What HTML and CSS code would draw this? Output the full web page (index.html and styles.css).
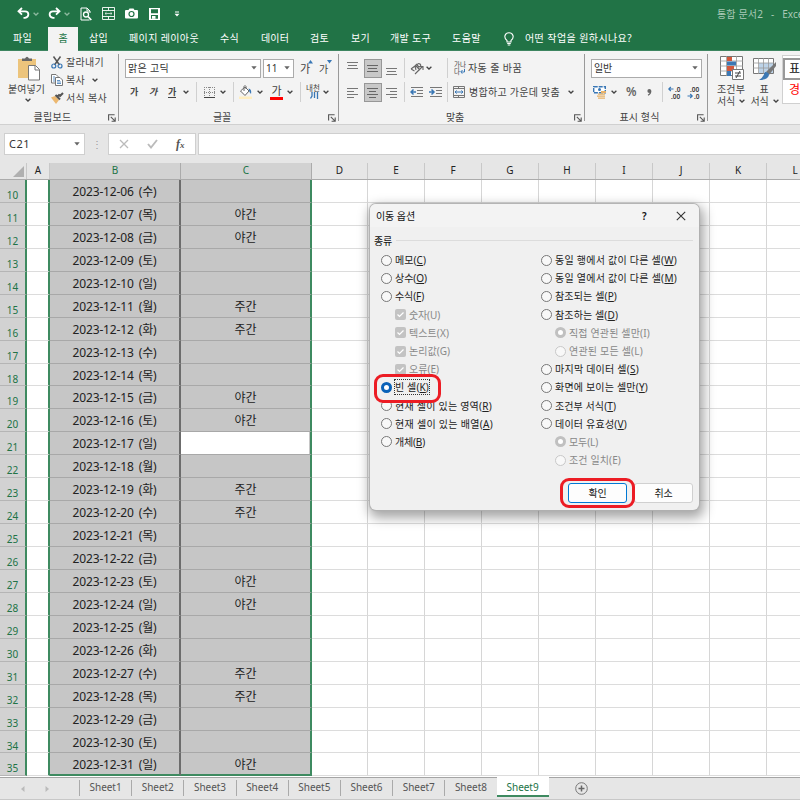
FILE: index.html
```html
<!DOCTYPE html>
<html lang="ko">
<head>
<meta charset="utf-8">
<title>통합 문서2 - Excel</title>
<link rel="stylesheet" href="styles.css">
</head>
<body>
<svg class="defs" width="0" height="0">
  <symbol id="chev" viewBox="0 0 6 4"><path d="M.6.7 3 3 5.4.7" fill="none" stroke="currentColor" stroke-width="1.3"/></symbol>
  <symbol id="tri" viewBox="0 0 6 4"><path d="M.3.3h5.4L3 3.4z" fill="#666"/></symbol>
  <symbol id="launch" viewBox="0 0 8 8"><path d="M.6 6.5V.7h6M2.8 2.8l4 4M7.2 3.4v3.8H3.6" fill="none" stroke="#555" stroke-width="1.1"/></symbol>
</svg>
<div class="app">
  <header class="titlebar">
    <div class="quick">
      <svg width="13" height="13" viewBox="0 0 13 13"><path d="M5 1 1.5 4.3 5 7.7M2 4.3h6c4.5 0 4.5 6 0 6.5H6.5" fill="none" stroke="#fff" stroke-width="1.8"/></svg>
      <svg class="dim" width="6" height="4"><use href="#chev"/></svg>
      <svg width="13" height="13" viewBox="0 0 13 13"><path d="M8 1l3.5 3.3L8 7.7M11 4.3H5c-4.5 0-4.5 6 0 6.5h1.5" fill="none" stroke="#fff" stroke-width="1.8"/></svg>
      <svg class="dim" width="6" height="4"><use href="#chev"/></svg>
      <svg width="12" height="14" viewBox="0 0 12 14"><path d="M9.5 13H1V1h6l3 3v2M7 1v3h3" fill="none" stroke="#fff"/><circle cx="6" cy="7.5" r="2.5" fill="none" stroke="#fff" stroke-width="1.3"/><path d="M8 9.5l3.3 3.5" stroke="#fff" stroke-width="1.7"/></svg>
      <svg width="13" height="13" viewBox="0 0 13 13"><path d="M.5.500h12v12H.500zM.500 3.500h12M.500 9.500h12M6.500.500v3M6.500 9.500v3" fill="none" stroke="#fff" stroke-width=".9"/><path d="M3 6.500h7M4.500 5.200 3 6.500l1.500 1.300M8.500 5.200 10 6.500 8.500 7.800" fill="none" stroke="#d5e5dc" stroke-width=".8"/></svg>
      <svg width="13" height="11" viewBox="0 0 13 11"><path d="M1 2h2.500l1-1.500h4l1 1.500H12q1 0 1 1v6.500q0 1-1 1H1q-1 0-1-1V3q0-1 1-1z" fill="#fff"/><circle cx="6.500" cy="6" r="2.500" fill="none" stroke="#217346" stroke-width="1.200"/></svg>
      <svg width="11" height="12" viewBox="0 0 11 12"><path d="M0 0h11v12H0z" fill="#fff"/><path d="M2 1.200h7v4H2zM2 7h7v3.800H2z" fill="#217346"/><path d="M3 8h3.500v2.800H3z" fill="#fff"/></svg>
      <svg width="6" height="6" viewBox="0 0 6 6"><path d="M1 .5h4v1H1zM.5 2.700h5L3 5.500z" fill="#fff"/></svg>
    </div>
    <div class="doc"><span data-w="46">통합 문서2</span><span>-</span><span>Excel</span></div>
  </header>
  <nav class="tabs">
    <div><span data-w="19">파일</span></div><div class="on"><span>홈</span></div><div><span data-w="19">삽입</span></div><div><span data-w="70">페이지 레이아웃</span></div><div><span data-w="19">수식</span></div><div><span data-w="28">데이터</span></div><div><span data-w="19">검토</span></div><div><span data-w="19">보기</span></div><div><span data-w="41">개발 도구</span></div><div><span data-w="29">도움말</span></div>
    <svg width="10" height="14" viewBox="0 0 10 14"><path d="M3 10V8.500C-.8 5.500.9.700 5 .700s5.800 4.800 2 7.800V10zM3.200 11.500h3.600M3.700 13h2.600" fill="none" stroke="#fff" stroke-width="1.100"/></svg>
    <div><span data-w="107">어떤 작업을 원하시나요?</span></div>
  </nav>

  <section class="ribbon">
    <div class="group clip">
      <div class="cliptop">
        <div class="big">
          <svg width="24" height="25" viewBox="0 0 24 25"><path d="M1 3h18v19H1z" fill="#ecc47c"/><path d="M5 5V2.500h3Q10-1 12 2.500h3V5z" fill="#666"/><path d="M11.500 9.500h7l4 4v10.500h-11z" fill="#fff" stroke="#777"/><path d="M18 9.500V14h4.500" fill="none" stroke="#777"/></svg>
          <span data-w="37">붙여넣기</span>
          <svg width="6" height="4"><use href="#chev"/></svg>
        </div>
        <div class="small">
          <div><svg width="12" height="13" viewBox="0 0 12 13"><path d="M2.500.500l6 8.500M9.500.500l-6 8.500" stroke="#555" stroke-width="1.500"/><circle cx="2.800" cy="10" r="2" fill="none" stroke="#3977b5" stroke-width="1.200"/><circle cx="9" cy="10" r="2" fill="none" stroke="#3977b5" stroke-width="1.200"/></svg><span data-w="38">잘라내기</span></div>
          <div><svg width="12" height="12" viewBox="0 0 12 12"><path d="M.500.500h4.500l2 2V9H.500z" fill="#fff" stroke="#777"/><path d="M4.500 3.500H9l2.500 2.500v5.500h-7z" fill="#fff" stroke="#777"/><path d="M2 3h2M2 5h2M2 7h2M6 6.500h3M6 8h4M6 9.500h4" stroke="#3977b5" stroke-width=".8"/></svg><span data-w="19">복사</span><svg width="6" height="4"><use href="#chev"/></svg></div>
          <div><svg width="13" height="12" viewBox="0 0 13 12"><path d="M0 5.500l4-1.500 4 4-3 4z" fill="#ecb870"/><path d="M4.500 3l4.500 4.500M6 5l2-2 2 1.500M9 4l3-3" stroke="#555" stroke-width="2" fill="none"/></svg><span data-w="41">서식 복사</span></div>
        </div>
      </div>
      <footer><span data-w="38">클립보드</span><svg width="8" height="8"><use href="#launch"/></svg></footer>
    </div>

    <div class="group font">
      <div class="r f1">
        <div class="sel"><span data-w="41">맑은 고딕</span><svg width="6" height="4"><use href="#tri"/></svg></div>
        <div class="sel"><span>11</span><svg width="6" height="4"><use href="#tri"/></svg></div>
        <div class="ga gabig">가<svg width="5" height="4" viewBox="0 0 5 4"><path d="M2.500 0 5 3.500H0z" fill="#3977b5"/></svg></div>
        <div class="ga">가<svg width="5" height="4" viewBox="0 0 5 4"><path d="M0 0h5L2.500 3.500z" fill="#3977b5"/></svg></div>
      </div>
      <div class="r f2">
        <b>가</b><b class="it">가</b><b class="un">가</b><svg width="6" height="4"><use href="#chev"/></svg><i></i>
        <svg width="11" height="11" viewBox="0 0 11 11"><path d="M.500 0v10M5.500 0v10M10.500 0v10M0 .500h11M0 5.500h11" stroke="#888" stroke-dasharray="1 1"/><path d="M0 10.500h11" stroke="#444"/></svg>
        <svg width="6" height="4"><use href="#chev"/></svg><i></i>
        <svg width="14" height="14" viewBox="0 0 14 14"><path d="M1.500 6 6 2l4 4-4 4.500z" fill="#fff" stroke="#666"/><path d="M5 6V1.500Q6-.500 7 1.500V4" fill="none" stroke="#666"/><path d="M9.500 3.500Q13 4 12 9 10 7 9.500 3.500z" fill="#3977b5"/><path d="M0 11.500h13V14H0z" fill="#ffeec0"/></svg>
        <svg width="6" height="4"><use href="#chev"/></svg>
        <div class="color">가</div>
        <svg width="6" height="4"><use href="#chev"/></svg><i></i>
        <div class="ruby">내천<svg width="9" height="7" viewBox="0 0 9 7"><path d="M2 0v4L.500 6.500M4.500 0v6M7.500 0v7" stroke="#3977b5" stroke-width="1.300" fill="none"/></svg></div>
        <svg width="6" height="4"><use href="#chev"/></svg>
      </div>
      <footer><span data-w="18">글꼴</span><svg width="8" height="8"><use href="#launch"/></svg></footer>
    </div>

    <div class="group align">
      <div class="r a1">
        <svg class="up" width="12" height="8" viewBox="0 0 12 8"><path d="M0 1.500h11M1 4.500h9M0 7.500h11" stroke="#777"/></svg>
        <div class="pressed"><svg width="12" height="8" viewBox="0 0 12 8"><path d="M0 1.500h11M1 4.500h9M0 7.500h11" stroke="#666"/></svg></div>
        <svg class="down" width="12" height="8" viewBox="0 0 12 8"><path d="M0 1.500h11M1 4.500h9M0 7.500h11" stroke="#777"/></svg><i></i>
        <svg width="14" height="14" viewBox="0 0 14 14"><path d="M1 8l3.500 2M1 8l4-3 1 4M5 4l5 5M6 3l3 3q3-1 1-3-2-1-3 1M5 13l7.500-7.500M9.500 5.500H13V9" fill="none" stroke="#666" stroke-width="1.100"/></svg>
        <svg width="6" height="4"><use href="#chev"/></svg><i></i>
        <div class="wrap">가나<div>다<svg width="5" height="5" viewBox="0 0 5 5"><path d="M4.500 0v3H1M2.500 1 .700 3l1.800 1.700" fill="none" stroke="#3977b5"/></svg></div></div>
        <span data-w="54">자동 줄 바꿈</span>
      </div>
      <div class="r a2">
        <svg width="12" height="11" viewBox="0 0 12 11"><path d="M0 1.500h11M0 4.500h7M0 7.500h11M0 10.500h7" stroke="#777"/></svg>
        <div class="pressed"><svg width="12" height="11" viewBox="0 0 12 11"><path d="M0 1.500h11M2 4.500h7M0 7.500h11M2 10.500h7" stroke="#666"/></svg></div>
        <svg width="12" height="11" viewBox="0 0 12 11"><path d="M0 1.500h11M4 4.500h7M0 7.500h11M4 10.500h7" stroke="#777"/></svg><i></i>
        <svg width="14" height="11" viewBox="0 0 14 11"><path d="M1 .500h12M7 3.500h6M7 6.500h6M1 9.500h12" stroke="#777"/><path d="M6 5H1M3.500 2.500 1 5l2.500 2.500" fill="none" stroke="#3977b5" stroke-width="1.500"/></svg>
        <svg width="14" height="11" viewBox="0 0 14 11"><path d="M1 .500h12M7 3.500h6M7 6.500h6M1 9.500h12" stroke="#777"/><path d="M0 5h5M2.500 2.500 5 5 2.500 7.500" fill="none" stroke="#3977b5" stroke-width="1.500"/></svg><i></i>
        <svg width="12" height="12" viewBox="0 0 12 12"><path d="M.500.500h11v11H.500zM.500 2.500h11M.500 9.500h11M5.500.500v2M5.500 9.500v2" fill="none" stroke="#777"/><path d="M2 6h8M3.700 4.500 2 6l1.700 1.500M8.300 4.500 10 6 8.300 7.500" fill="none" stroke="#3977b5"/></svg>
        <span data-w="91">병합하고 가운데 맞춤</span>
        <svg width="6" height="4"><use href="#chev"/></svg>
      </div>
      <footer><span data-w="18">맞춤</span><svg width="8" height="8"><use href="#launch"/></svg></footer>
    </div>

    <div class="group num">
      <div class="r n1"><div class="sel"><span data-w="18">일반</span><svg width="6" height="4"><use href="#tri"/></svg></div></div>
      <div class="r n2">
        <svg width="14" height="13" viewBox="0 0 14 13"><path d="M.700.700h11.600v6H.700z" fill="#fff" stroke="#3977b5" stroke-width="1.400" stroke-dasharray="4 1"/><circle cx="6.500" cy="3.500" r="1.500" fill="#3977b5"/><path d="M5 7.500h7v1.200H5zM4 9.500h8v1.200H4zM5 11.500h7v1.200H5z" fill="#e8b268"/><path d="M8 5h5v2H8z" fill="#e8b268"/></svg>
        <svg width="6" height="4"><use href="#chev"/></svg>
        <strong>%</strong>
        <svg width="5" height="7" viewBox="0 0 5 7"><circle cx="2.300" cy="2" r="1.900" fill="#666"/><path d="M3.700 1.500Q4.300 4.500 1 6.300" fill="none" stroke="#666" stroke-width="1.100"/></svg><i></i>
        <svg class="dec" width="13" height="13" viewBox="0 0 13 13"><path d="M5.500 3H.800M2.800 1 .800 3l2 2" fill="none" stroke="#3977b5" stroke-width="1.200"/><text x="7" y="6">.0</text><text x="3" y="12.500">.00</text></svg>
        <svg class="dec" width="13" height="13" viewBox="0 0 13 13"><text x="3" y="6">.00</text><path d="M.500 10h4.700M3.200 8l2 2-2 2" fill="none" stroke="#3977b5" stroke-width="1.200"/><text x="7" y="12.500">.0</text></svg>
      </div>
      <footer><span data-w="40">표시 형식</span><svg width="8" height="8"><use href="#launch"/></svg></footer>
    </div>

    <div class="group styles">
      <div class="big">
        <svg width="25" height="25" viewBox="0 0 25 25"><path d="M.500.500h22v19H.500z" fill="#fff" stroke="#777"/><path d="M6.500 0v20M16.500 0v20M0 5h23M0 10h23M0 15h23" stroke="#999" stroke-width=".8"/><path d="M7 1h5v4H7zM7 10h7v5H7z" fill="#d2583c"/><path d="M7 5.500h9v4H7zM7 15h4v5H7z" fill="#3c78b4"/><path d="M12.500 13.500h11v10h-11z" fill="#fff" stroke="#777"/><path d="M15 17h6M15 20h6M20 15l-4 7" stroke="#444"/></svg>
        <span data-w="28">조건부</span>
        <div><span data-w="18">서식</span><svg width="6" height="4"><use href="#chev"/></svg></div>
      </div>
      <div class="big">
        <svg width="25" height="25" viewBox="0 0 25 25"><path d="M.500 2.500h20v15H.500z" fill="#fff" stroke="#777"/><path d="M6 7h14v10H6z" fill="#bdd3e8"/><path d="M5.500 2v16M10.500 2v16M15.500 2v16M0 7h21M0 12h21" stroke="#999" stroke-width=".8"/><path d="M23 6v4l-7 9-3-3z" fill="#777"/><path d="M12 16q4 0 4 3-1 5-10 5 4-2 6-8z" fill="#3c78b4"/></svg>
        <span>표</span>
        <div><span data-w="18">서식</span><svg width="6" height="4"><use href="#chev"/></svg></div>
      </div>
      <div class="gallery"><div class="normal">표</div><div class="warn">경</div></div>
    </div>
  </section>

  <section class="formula">
    <div class="name"><span data-w="21">C21</span><svg width="6" height="4"><use href="#tri"/></svg></div>
    <div class="dots">⋮</div>
    <div class="fx">
      <svg width="10" height="10" viewBox="0 0 10 10"><path d="M1 1l8 8M9 1 1 9" stroke="#bbb" stroke-width="1.300"/></svg>
      <svg width="11" height="10" viewBox="0 0 11 10"><path d="M1 5l3 3.500L10 1" fill="none" stroke="#bbb" stroke-width="1.900"/></svg>
      <span>f<small>x</small></span>
    </div>
    <div class="bar"></div>
  </section>

  <main class="sheet">
    <div class="heads" id="heads"></div>
    <div class="rows" id="rows"></div>
  </main>

  <footer class="sheets">
    <div class="nav"><svg width="4" height="6" viewBox="0 0 4 6"><path d="M3.500 0v6L0 3z" fill="#bbb"/></svg><svg width="4" height="6" viewBox="0 0 4 6"><path d="M.500 0v6L4 3z" fill="#bbb"/></svg></div>
    <div class="tablist" id="tablist"></div>
    <svg class="plus" width="13" height="13" viewBox="0 0 13 13"><circle cx="6.500" cy="6.500" r="5.800" fill="none" stroke="#777"/><path d="M3.500 6.500h6M6.500 3.500v6" stroke="#666" stroke-width="1.500"/></svg>
  </footer>

  <div class="dialog">
    <div class="dtitle"><span data-w="39">이동 옵션</span><span class="q">?</span><svg width="10" height="10" viewBox="0 0 10 10"><path d="M.800.800l8.400 8.400M9.200.800.800 9.200" stroke="#333" stroke-width="1.100"/></svg></div>
    <div class="legend"><span data-w="18">종류</span><hr></div>
    <div class="options"><div id="left"></div><div id="right"></div></div>
    <div class="buttons"><div class="ok"><span data-w="18">확인</span></div><div><span data-w="18">취소</span></div></div>
    <div class="ring ring-option"></div>
    <div class="ring ring-ok"></div>
  </div>
</div>
<script src="app.js"></script>
</body>
</html>
```
FILE: styles.css
```css
* { box-sizing: border-box; }
body { margin: 0; background: #fff; font-family: "Noto Sans", "Noto Sans CJK KR", sans-serif; font-size: 10px; color: #444; }
.app { position: relative; width: 800px; height: 800px; overflow: hidden; display: flex; flex-direction: column; line-height: 14px; white-space: nowrap; }
.app svg { display: block; flex: none; }
.defs { position: absolute; }
span { flex: none; justify-self: start; }

.titlebar { height: 27px; background: #217346; display: flex; justify-content: space-between; color: #a9c9b7; }
.quick { display: grid; grid-template-columns: 16px 15px 16px 16px 22px 23px 24px 25px 10px; padding-left: 17px; align-items: center; height: 27px; }
.dim { color: #8db99f; }
.doc { display: flex; gap: 8px; padding-top: 7px; width: 83px; }
.tabs { height: 24px; background: #217346; color: #fff; display: grid; grid-template-columns: 48px 30px 38px 102px 29px 62px 38px 42px 61px 54px 21px 120px; align-items: center; border-bottom: 1px solid #3d8560; }
.tabs div { height: 24px; padding-top: 4px; padding-left: 0; }
.tabs div:first-child { padding-left: 13px; }
.tabs .on { background: #f3f3f3; color: #217346; text-align: center; }
.tabs div:nth-child(3) { padding-left: 11px; }
.tabs div:nth-child(4) { padding-left: 13px; }
.tabs div:nth-child(5) { padding-left: 2px; }
.tabs div:nth-child(6) { padding-left: 14px; }
.tabs div:nth-child(7) { padding-left: 1px; }
.tabs div:nth-child(8) { padding-left: 4px; }
.tabs div:nth-child(9) { padding-left: 1px; }
.tabs div:nth-child(10) { padding-left: 2px; }

.ribbon { height: 74px; background: #f3f3f3; border-bottom: 1px solid #d0d0d0; display: flex; }
.group { position: relative; flex: none; display: flex; flex-direction: column; padding-top: 6px; }
.group::after { content: ""; position: absolute; right: 0; top: 3px; width: 1px; height: 67px; background: #999; }
.group footer { display: flex; justify-content: center; align-items: center; height: 14px; position: relative; margin-top: auto; padding-right: 14px; }
.group footer svg { position: absolute; right: 3px; top: 4px; }
.clip { width: 119px; }
.font { width: 220px; }
.align { width: 246px; }
.num { width: 123px; }
.styles { width: 92px; flex-direction: row; }
.styles::after { display: none; }
.cliptop { display: flex; margin-top: -1px; }
.big { display: flex; flex-direction: column; align-items: center; width: 51px; flex: none; }
.big > svg:first-child { margin-left: 6px; }
.big > span { margin-top: 1px; height: 13px; }
.cliptop .big > span { margin-left: 2px; }
.cliptop .big > svg:last-child { margin-left: 5px; margin-top: 3px; }
.small div { display: grid; grid-template-columns: 15px 26px 6px; align-items: center; height: 18px; }
.small { margin-top: -3px; }
.r { display: grid; height: 22px; align-items: center; }
.r + .r { margin-top: 2px; }
.r i { display: block; width: 1px; height: 20px; background: #d0d0d0; }
.sel { height: 19px; background: #fff; border: 1px solid #ababab; display: flex; align-items: center; justify-content: space-between; padding: 0 3px 0 2px; color: #333; }
.f1 { grid-template-columns: 136px 31px 16px 20px; column-gap: 2px; padding-left: 6px; }
.f1 .ga { position: relative; width: 14px; margin-left: 5px; padding-top: 2px; font-size: 10px; }
.f1 .gabig { font-size: 11px; margin-left: 4px; }
.ga svg { position: absolute; right: 1px; top: 0; }
.f2 { grid-template-columns: 19px 19px 15px 13px 8px 16px 13px 6px 18px 13px 17px 13px 6px 17px 6px; padding-left: 11px; }
.f2 b { font-size: 9px; }
.f2 .it { font-style: italic; }
.f2 .un { border-bottom: 1px solid #444; width: 8px; line-height: 11px; }
.color { width: 13px; height: 15px; border-bottom: 3px solid #f00; line-height: 11px; text-align: center; font-size: 11px; }
.ruby { font-size: 7.500px; line-height: 7px; width: 13px; }
.ruby svg { margin-left: 4px; }
.a1, .a2 { padding-left: 8px; }
.a1 { grid-template-columns: 17px 22px 18px 6px 16px 21px 7px 14px 60px; }
.a2 { grid-template-columns: 17px 22px 18px 6px 19px 18px 6px 16px 99px 6px; }
.up { margin-top: -7px; }
.down { margin-top: 5px; }
.pressed { width: 18px; height: 19px; background: #c8c8c8; border: 1px solid #979797; display: flex; align-items: center; justify-content: center; }
.wrap { font-size: 6.500px; line-height: 7px; width: 13px; }
.wrap div { display: flex; align-items: center; }
.n1 { padding: 0 6px; }
.n2 { grid-template-columns: 18px 15px 21px 15px 6px 19px 14px; padding-left: 8px; }
.n2 strong { font-weight: 600; font-size: 12px; color: #666; }
.dec text { font-size: 6.500px; font-weight: 600; fill: #333; }
.styles .big { width: 34px; margin-left: 6px; margin-top: -1px; }
.styles .big + .big { margin-left: 0; width: 33px; }
.styles .big > svg:first-child { margin-left: 2px; }
.styles .big div { display: flex; align-items: center; gap: 4px; height: 12px; }
.styles .big + .big > span { margin-left: -1px; }
.styles .gallery { width: 30px; height: 49px; margin-left: 1px; margin-top: -2px; border: 1px solid #d0d0d0; background: #fff; flex: none; }
.normal { height: 22px; margin-top: 2px; border: 2px solid #999; padding-left: 4px; font-size: 12px; line-height: 18px; color: #111; }
.warn { color: #f00; font-size: 12px; line-height: 20px; padding-left: 6px; }

.formula { height: 38px; background: #e6e6e6; display: flex; align-items: flex-start; padding: 8px 0 0 4px; }
.formula > div { height: 22px; }
.name { width: 81px; background: #fff; border: 1px solid #cfcfcf; display: flex; align-items: center; justify-content: space-between; padding: 0 4px; font-size: 11px; color: #333; }
.dots { width: 23px; text-align: center; line-height: 22px; color: #999; }
.fx { width: 88px; border: 1px solid #cfcfcf; background: #fff; display: grid; grid-template-columns: 28px 29px 20px; padding-left: 10px; align-items: center; }
.fx span { font: italic bold 12px "Liberation Serif", serif; color: #555; }
.fx small { font-size: 9px; }
.bar { flex: 1; margin-left: 2px; background: #fff; border: 1px solid #cfcfcf; border-right: 0; }

.sheet { height: 614px; flex: none; overflow: hidden; }
.heads, .row { display: grid; grid-template-columns: 27px 23px 131px 131px 56px repeat(8, 57px); }
.heads { height: 17px; background: #e6e6e6; border-bottom: 1px solid #ababab; text-align: center; color: #222; }
.heads div { border-right: 1px solid #c8c8c8; line-height: 15px; }
.heads .hit { background: #d2d2d2; color: #217346; border-right-color: #ababab; }
.heads .corner { display: flex; justify-content: flex-end; align-items: flex-end; padding: 0 2px 2px 0; }
.row { height: 22.950px; grid-template-rows: 22.950px; text-align: center; }
.row > div { min-height: 0; height: 22.950px; border-right: 1px solid #d6d6d6; border-bottom: 1px solid #dcdcdc; }
.row > .no { background: #d2d2d2; color: #217346; border-right: 2px solid #3e8a60; border-bottom-color: #b5b5b5; padding-top: 8px; line-height: 15px; }
.row > .a { border-right: 2px solid #3e8a60; }
.row > .b, .row > .c { background: #c6c6c6; border-bottom-color: #a8a8a8; color: #222; font-size: 12px; line-height: 23px; }
.row > .b { border-right: 2px solid #6c6c6c; word-spacing: 2px; }
.row > .c { border-right: 2px solid #3e8a60; }
.row > .blank { background: #fff; box-shadow: inset -1px 0 #c6c6c6; }
.row:last-child > .b, .row:last-child > .c { border-bottom: 2px solid #3e8a60; }

.sheets { height: 23px; flex: none; background: #e6e6e6; border-top: 1px solid #a5a5a5; border-bottom: 1px solid #c8c8c8; display: flex; }
.nav { width: 79px; padding: 8px 0 0 21px; display: flex; gap: 20px; }
.tablist { display: grid; grid-template-columns: repeat(9, 52.200px); }
.tablist div { text-align: center; border-left: 1px solid #aaa; height: 16px; margin-top: 2px; line-height: 15px; color: #555; }
.tablist .cur { background: #fff; color: #217346; border: 0; border-bottom: 2px solid #3e8a60; height: 20px; margin-top: -1px; line-height: 20px; }
.plus { margin: 4px 0 0 26px; }

.dialog { position: absolute; left: 370px; top: 204px; width: 329px; height: 306px; background: #f0f0f0; border-radius: 6px; box-shadow: 0 0 1px 1px #b0b0b0, 2px 5px 12px 3px rgba(0,0,0,.35); color: #222; }
.dtitle { height: 23px; background: #f3f3f3; border-radius: 6px 6px 0 0; display: grid; grid-template-columns: 265px 35px 12px; align-items: center; padding-left: 6px; color: #111; }
.q { font-weight: 600; padding-left: 1px; }
.legend { display: flex; align-items: center; height: 27px; padding: 0 6px 0 4px; gap: 4px; color: #111; }
hr { flex: 1; height: 1px; border: 0; background: #dcdcdc; margin: 0; }
.options { display: grid; grid-template-columns: 160px 158px; margin-top: -3px; padding-left: 11px; height: 220px; }
.opt { height: 18.200px; display: flex; align-items: center; gap: 3px; }
.opt.sub { padding-left: 14px; color: #888; }
.mark { width: 11px; height: 11px; border: 1px solid #777; border-radius: 50%; background: #f8f8f8; }
.sub .mark { border-color: #c8c8c8; }
.mark.on { border: 3.500px solid #0a62b8; background: #fff; }
.sub .mark.on { border: 3.500px solid #c0c0c0; }
.check { width: 11px; height: 11px; background: #c3c3c3; border-radius: 2px; padding: 1px; }
.focus { outline: 1px dotted #333; outline-offset: 0.5px; }
.opt span { line-height: 14px; }
.buttons { display: flex; gap: 7px; padding-left: 198px; margin-top: 12px; }
.buttons div { width: 59px; height: 20px; background: #fdfdfd; border: 1px solid #d0d0d0; border-radius: 3px; display: flex; align-items: center; justify-content: center; padding-bottom: 1px; color: #111; }
.buttons .ok { border: 1px solid #0078d4; }
.ring { position: absolute; border: 3px solid #ec1c24; border-radius: 9px; }
.ring-option { left: 4px; top: 170px; width: 67px; height: 29px; }
.ring-ok { left: 190px; top: 274px; width: 75px; height: 30px; }
```
FILE: app.js
```js
const el = id => document.getElementById(id);

const cols = ['A', 'B', 'C', 'D', 'E', 'F', 'G', 'H', 'I', 'J', 'K', 'L'];
el('heads').innerHTML =
  '<div class="corner"><svg width="11" height="11" viewBox="0 0 11 11"><path d="M11 0v11H0z" fill="#b0b0b0"/></svg></div>' +
  cols.map(c => `<div class="${c === 'B' || c === 'C' ? 'hit' : ''}">${c}</div>`).join('');

const week = '일월화수목금토';
const shift = { 7: '야간', 8: '야간', 11: '주간', 12: '주간', 15: '야간', 16: '야간', 19: '주간', 20: '주간', 23: '야간', 24: '야간', 27: '주간', 28: '주간', 31: '야간' };
let rows = '';
for (let day = 6; day <= 31; day++) {
  const date = `2023-12-${String(day).padStart(2, '0')} (${week[new Date(2023, 11, day).getDay()]})`;
  rows += `<div class="row"><div class="no">${day + 4}</div><div class="a"></div>` +
    `<div class="b"><span data-w="84">${date}</span></div><div class="c ${day === 17 ? 'blank' : ''}">${shift[day] || ''}</div>` +
    '<div></div>'.repeat(9) + '</div>';
}
el('rows').innerHTML = rows;

el('tablist').innerHTML = [1, 2, 3, 4, 5, 6, 7, 8, 9]
  .map(n => `<div class="${n === 9 ? 'cur' : ''}"><span data-w="32">Sheet${n}</span></div>`).join('');

// label, access key, width, kind
const left = [
  ['메모', 'C', 31], ['상수', 'O', 32], ['수식', 'F', 29],
  ['숫자', 'U', 31, 'check'], ['텍스트', 'X', 40, 'check'], ['논리값', 'G', 41, 'check'], ['오류', 'E', 30, 'check'],
  ['빈 셀', 'K', 34, 'focus'], ['현재 셀이 있는 영역', 'R', 97], ['현재 셀이 있는 배열', 'A', 98], ['개체', 'B', 30]
];
const right = [
  ['동일 행에서 값이 다른 셀', 'W', 122], ['동일 열에서 값이 다른 셀', 'M', 122], ['참조되는 셀', 'P', 62], ['참조하는 셀', 'D', 63],
  ['직접 연관된 셀만', 'I', 81, 'subon'], ['연관된 모든 셀', 'L', 74, 'sub'],
  ['마지막 데이터 셀', 'S', 84], ['화면에 보이는 셀만', 'Y', 93], ['조건부 서식', 'T', 61], ['데이터 유효성', 'V', 72],
  ['모두', 'L', 29, 'subon'], ['조건 일치', 'E', 52, 'sub']
];
const tick = '<svg width="9" height="9" viewBox="0 0 9 9"><path d="M1.500 4.500l2 2L7.500 2.500" fill="none" stroke="#fff" stroke-width="1.200"/></svg>';
const option = ([text, key, width, kind = '']) => {
  const sub = kind === 'check' || kind.startsWith('sub');
  const on = kind === 'focus' || kind === 'subon';
  const mark = kind === 'check' ? `<div class="check">${tick}</div>` : `<div class="mark ${on ? 'on' : ''}"></div>`;
  const label = sub ? `${text}(${key})` : `${text}(<u>${key}</u>)`;
  return `<div class="opt ${sub ? 'sub' : ''}">${mark}<span class="${kind === 'focus' ? 'focus' : ''}" data-w="${width}">${label}</span></div>`;
};
el('left').innerHTML = left.map(option).join('');
el('right').innerHTML = right.map(option).join('');

// Track each label so that it fills its assigned width.
document.querySelectorAll('[data-w]').forEach(s => {
  const natural = s.getBoundingClientRect().width;
  s.style.letterSpacing = (s.dataset.w - natural) / s.textContent.length + 'px';
});
```
